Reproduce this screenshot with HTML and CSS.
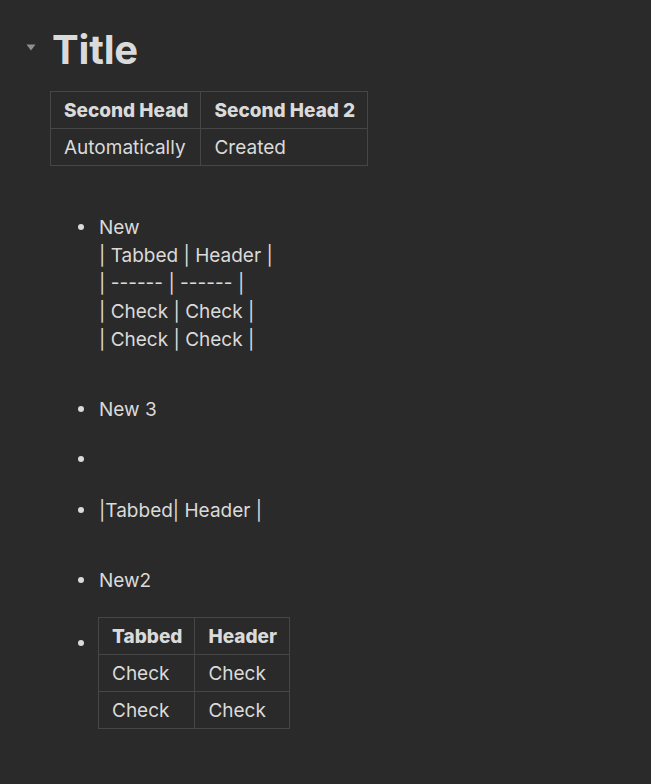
FILE: index.html
```html
<!DOCTYPE html>
<html>
<head>
<meta charset="utf-8">
<link rel="stylesheet" href="styles.css">
</head>
<body>
<div class="page">
  <div class="heading">
    <span class="fold"><svg width="10" height="7" viewBox="0 0 10 7"><path d="M0.5 0.5 L9.5 0.5 L5 6.5 Z" fill="#8f8f8f"/></svg></span>
    <h1 class="title">Title</h1>
  </div>
  <table class="tbl top-tbl">
    <tr><th>Second Head</th><th>Second Head 2</th></tr>
    <tr><td>Automatically</td><td>Created</td></tr>
  </table>
  <ul class="list">
    <li class="item first">New<br>| Tabbed | Header |<br>| ------ | ------ |<br>| Check | Check |<br>| Check | Check |</li>
    <li class="item gap-lg">New 3</li>
    <li class="item gap-sm empty">&nbsp;</li>
    <li class="item gap-md">|Tabbed| Header |</li>
    <li class="item gap-lg">New2</li>
    <li class="item gap-sm table-item">
      <table class="tbl">
        <tr><th>Tabbed</th><th>Header</th></tr>
        <tr><td>Check</td><td>Check</td></tr>
        <tr><td>Check</td><td>Check</td></tr>
      </table>
    </li>
  </ul>
</div>
</body>
</html>
```
FILE: styles.css
```css
html, body {
  margin: 0;
  padding: 0;
  background: #2a2a2a;
}
body {
  font-family: Inter, "Noto Sans", sans-serif;
  color: #dadada;
  font-size: 19px;
  line-height: 28px;
  width: 651px;
  height: 784px;
  overflow: hidden;
}
.page {
  padding: 22px 0 0 50px;
}
.heading {
  display: flex;
  align-items: center;
  position: relative;
  height: 56px;
}
.fold {
  position: absolute;
  left: -24px;
  top: 22px;
  display: block;
  line-height: 0;
}
.title {
  margin: 0 0 0 2px;
  font-size: 40px;
  line-height: 56px;
  font-weight: 700;
  color: #dadada;
  letter-spacing: -0.2px;
}
.tbl {
  border-collapse: collapse;
}
.top-tbl {
  margin-top: 13px;
}
.tbl th, .tbl td {
  border: 1px solid #464646;
  padding: 5px 12px 3px 13px;
  text-align: left;
  line-height: 28px;
}
.tbl th {
  font-weight: 800;
}
.list {
  margin: 0;
  padding: 0 0 0 49px;
  list-style: none;
}
.item {
  position: relative;
}
.item::before {
  content: "";
  position: absolute;
  left: -21px;
  top: 10px;
  width: 6px;
  height: 6px;
  border-radius: 50%;
  background: #dadada;
}
.first { margin-top: 48px; }
.gap-lg { margin-top: 42px; }
.gap-sm { margin-top: 22px; }
.gap-md { margin-top: 23px; }
.table-item::before {
  top: 23px;
}
.table-item .tbl {
  margin-top: 0;
  margin-left: -1px;
}
```
